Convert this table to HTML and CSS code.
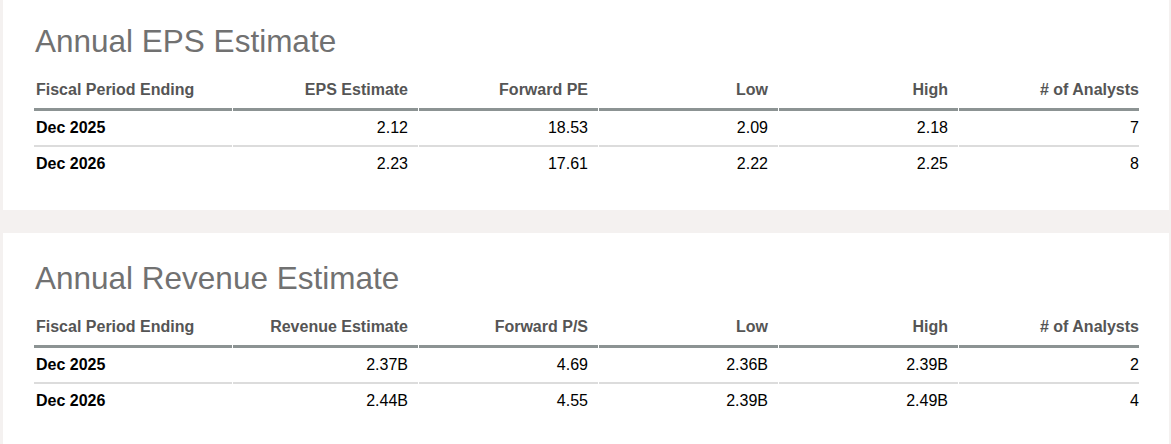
FILE: index.html
```html
<!DOCTYPE html>
<html>
<head>
<meta charset="utf-8">
<link rel="stylesheet" href="styles.css">
</head>
<body>
<div class="page">
  <section class="card">
    <h2 class="card-title">Annual EPS Estimate</h2>
    <table class="est">
      <colgroup>
        <col class="c-period"><col class="c-est"><col class="c-fwd"><col class="c-low"><col class="c-high"><col class="c-count">
      </colgroup>
      <thead>
        <tr><th class="first">Fiscal Period Ending</th><th>EPS Estimate</th><th>Forward PE</th><th>Low</th><th>High</th><th class="last"># of Analysts</th></tr>
      </thead>
      <tbody>
        <tr><td class="first">Dec 2025</td><td>2.12</td><td>18.53</td><td>2.09</td><td>2.18</td><td class="last">7</td></tr>
        <tr><td class="first">Dec 2026</td><td>2.23</td><td>17.61</td><td>2.22</td><td>2.25</td><td class="last">8</td></tr>
      </tbody>
    </table>
  </section>
  <section class="card">
    <h2 class="card-title">Annual Revenue Estimate</h2>
    <table class="est">
      <colgroup>
        <col class="c-period"><col class="c-est"><col class="c-fwd"><col class="c-low"><col class="c-high"><col class="c-count">
      </colgroup>
      <thead>
        <tr><th class="first">Fiscal Period Ending</th><th>Revenue Estimate</th><th>Forward P/S</th><th>Low</th><th>High</th><th class="last"># of Analysts</th></tr>
      </thead>
      <tbody>
        <tr><td class="first">Dec 2025</td><td>2.37B</td><td>4.69</td><td>2.36B</td><td>2.39B</td><td class="last">2</td></tr>
        <tr><td class="first">Dec 2026</td><td>2.44B</td><td>4.55</td><td>2.39B</td><td>2.49B</td><td class="last">4</td></tr>
      </tbody>
    </table>
  </section>
</div>
</body>
</html>
```

FILE: styles.css
```css
html, body {
  margin: 0;
  padding: 0;
  background: #f4f1f0;
  font-family: "Liberation Sans", Arial, sans-serif;
}

.page {
  display: flex;
  flex-direction: column;
  gap: 23px;
  padding: 0 2px 0 3px;
  margin-top: -4px;
}

.card {
  background: #ffffff;
  padding: 27px 30px 29px 31px;
}

.card-title {
  margin: 0 0 14px 1px;
  font-size: 31.5px;
  line-height: 36px;
  font-weight: normal;
  color: #717171;
}

.est {
  table-layout: fixed;
  border-collapse: separate;
  border-spacing: 1px 0;
  width: calc(100% + 2px);
  margin: 0 -1px;
  font-size: 16px;
  line-height: 18px;
}

.c-period { width: 198px; }
.c-est { width: 185px; }
.c-fwd { width: 179px; }
.c-low { width: 179px; }
.c-high { width: 179px; }
.c-count { width: 180px; }

.est th {
  font-weight: bold;
  color: #555555;
  text-align: right;
  padding: 8px 10px 9px 0;
  border-bottom: 3px solid #8c9393;
  white-space: nowrap;
}

.est td {
  color: #000000;
  text-align: right;
  padding: 8px 10px 8px 0;
  white-space: nowrap;
}

.est tbody tr:first-child td {
  border-bottom: 2px solid #dcdcdc;
}

.est .first {
  text-align: left;
  padding-left: 2px;
}

.est td.first {
  font-weight: bold;
}

.est .last {
  padding-right: 0;
}
```
